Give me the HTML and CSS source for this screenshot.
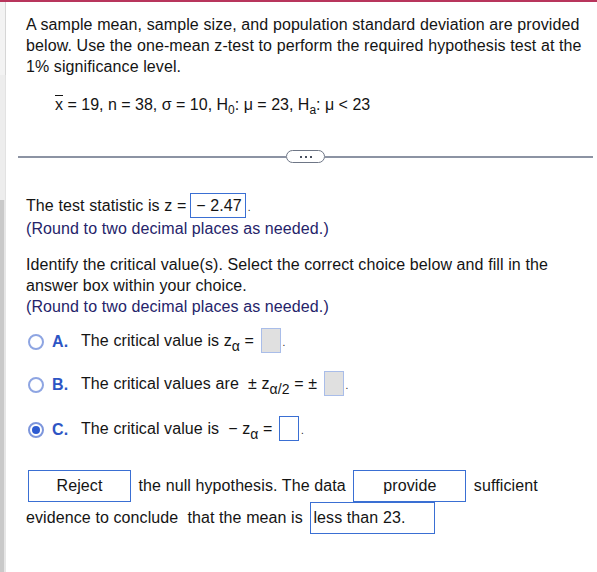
FILE: index.html
```html
<!DOCTYPE html>
<html lang="en">
<head>
<meta charset="utf-8">
<title>One-mean z-test</title>
<link rel="stylesheet" href="styles.css">
</head>
<body>
<div class="topline"></div>
<div class="page">
  <div class="rail">
    <div class="rail-top"></div>
    <div class="rail-mid"></div>
    <div class="rail-low"></div>
  </div>
  <div class="main">
    <p class="intro">A sample mean, sample size, and population standard deviation are provided below. Use the one-mean z-test to perform the required hypothesis test at the 1% significance level.</p>
    <p class="given"><span class="xbar">x</span> = 19, n = 38, σ = 10, H<sub>0</sub>: μ = 23, H<sub>a</sub>: μ &lt; 23</p>

    <div class="divider">
      <span class="rule"></span>
      <span class="more"><i></i><i></i><i></i></span>
      <span class="rule"></span>
    </div>

    <p class="stat">The test statistic is z =<span class="answer">− 2.47</span><span class="dot">.</span></p>
    <p class="hint">(Round to two decimal places as needed.)</p>

    <p class="task">Identify the critical value(s). Select the correct choice below and fill in the answer box within your choice.</p>
    <p class="hint">(Round to two decimal places as needed.)</p>

    <div class="option opt-a">
      <span class="radio"></span>
      <span class="letter">A.</span>
      <span class="otext">The critical value is z<sub class="alpha">α</sub> = <span class="box box-off"></span><span class="dot">.</span></span>
    </div>
    <div class="option opt-b">
      <span class="radio"></span>
      <span class="letter">B.</span>
      <span class="otext">The critical values are &nbsp;± z<sub class="alpha">α/2</sub> = ± <span class="box box-off"></span><span class="dot">.</span></span>
    </div>
    <div class="option opt-c">
      <span class="radio radio-on"></span>
      <span class="letter">C.</span>
      <span class="otext">The critical value is &nbsp;− z<sub class="alpha">α</sub> = <span class="box box-on"></span><span class="dot">.</span></span>
    </div>

    <p class="sentence"><span class="drop drop-reject">Reject</span> <span>the null hypothesis. The data</span> <span class="drop drop-provide">provide</span> <span>sufficient</span> <span>evidence to conclude&nbsp; that the mean is</span> <span class="drop drop-less">less than 23.</span></p>
  </div>
</div>
</body>
</html>
```

FILE: styles.css
```css
html, body {
  margin: 0;
  padding: 0;
  background: #ffffff;
}

body {
  font-family: "Liberation Sans", Arial, sans-serif;
  font-size: 16px;
  letter-spacing: 0.1px;
  color: #141414;
  width: 597px;
  height: 572px;
  overflow: hidden;
}

.topline {
  height: 2px;
  background: #b8355c;
}

.page {
  display: flex;
  height: 570px;
}

.rail {
  width: 6px;
  display: flex;
  flex-direction: column;
  flex-shrink: 0;
}

.rail-top {
  height: 73px;
  background: #f3f3f3;
  border-right: 1px solid #d6d6d6;
}

.rail-mid {
  height: 125px;
  background: #ededed;
  border-right: 1px solid #e2e2e2;
}

.rail-low {
  flex: 1;
  background: #c9c9c9;
  border-right: 2px solid #e6e6e6;
}

.main {
  flex: 1;
  padding: 12px 4px 0 12px;
}

p {
  margin: 0;
  line-height: 21px;
}

.intro,
.stat,
.hint,
.task,
.sentence {
  padding-left: 8px;
  padding-right: 3px;
}

.given {
  margin-top: 17px;
  padding-left: 37px;
  letter-spacing: 0;
}

.xbar {
  text-decoration: overline;
}

sub {
  font-size: 12px;
  line-height: 0;
  vertical-align: -4px;
}

.divider {
  display: flex;
  align-items: center;
  margin-top: 35px;
  height: 13px;
}

.rule {
  flex: 1;
  height: 2px;
  background: #8c93a3;
}

.more {
  width: 39px;
  height: 13px;
  box-sizing: border-box;
  border: 1.5px solid #6e7686;
  border-radius: 7px;
  display: flex;
  align-items: center;
  justify-content: center;
  gap: 3px;
  background: #fff;
}

.more i {
  display: block;
  width: 2px;
  height: 2px;
  background: #4a5160;
}

.stat {
  margin-top: 30px;
  height: 25px;
  line-height: 25px;
}

.answer {
  display: inline-block;
  box-sizing: border-box;
  height: 25px;
  line-height: 23px;
  padding: 0 3px 0 5px;
  border: 1px solid #3a6fd3;
  vertical-align: top;
  margin-left: 4px;
}

.dot {
  font-size: 10px;
  margin-left: 2px;
}

.hint {
  color: #25246a;
}

.task {
  margin-top: 15px;
}

.option {
  display: flex;
  align-items: center;
  height: 25px;
  padding-left: 10px;
}

.opt-a { margin-top: 12px; }
.opt-b { margin-top: 18px; }
.opt-c { margin-top: 20px; }

.radio {
  width: 16px;
  height: 16px;
  box-sizing: border-box;
  border: 2px solid #8ea5e2;
  border-radius: 50%;
  position: relative;
  flex-shrink: 0;
}

.radio-on {
  border-color: #7d96dc;
}

.radio-on::after {
  content: "";
  position: absolute;
  left: 2px;
  top: 2px;
  width: 8px;
  height: 8px;
  border-radius: 50%;
  background: #2d5bd1;
}

.letter {
  width: 29px;
  margin-left: 8px;
  font-weight: bold;
  color: #2d55c4;
}

.otext {
  display: block;
  line-height: 25px;
  white-space: nowrap;
}

.alpha {
  font-size: 14px;
  vertical-align: -5px;
}

.box {
  display: inline-block;
  width: 20px;
  height: 25px;
  box-sizing: border-box;
  margin-left: 2px;
  vertical-align: top;
}

.box-off {
  background: #e0e0e0;
  border: 1px solid #a9bde9;
}

.box-on {
  background: #ffffff;
  border: 1px solid #3a6fd3;
}

.sentence {
  margin-top: 28px;
  line-height: 32px;
}

.drop {
  display: inline-block;
  box-sizing: border-box;
  height: 32px;
  line-height: 30px;
  border: 1px solid #3a6fd3;
  vertical-align: top;
}

.drop-reject {
  width: 103px;
  margin-left: 2px;
  margin-right: 3px;
  text-align: center;
}

.drop-provide {
  width: 113px;
  margin-left: 3px;
  margin-right: 3px;
  text-align: center;
}

.drop-less {
  width: 125px;
  margin-left: 3px;
  padding-left: 2px;
}
```
